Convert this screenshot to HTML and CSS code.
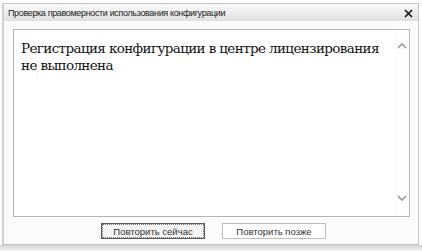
FILE: index.html
```html
<!DOCTYPE html>
<html lang="ru">
<head>
<meta charset="utf-8">
<link rel="stylesheet" href="styles.css">
</head>
<body>
<div class="window">
  <div class="titlebar">
    <span class="title">Проверка правомерности использования конфигурации</span>
    <svg class="close" width="9" height="9" viewBox="0 0 9 9"><path d="M1 1 L8 8 M8 1 L1 8" stroke="#1a1a1a" stroke-width="1.7"/></svg>
  </div>
  <div class="body">
    <div class="textbox">
      <div class="message">Регистрация конфигурации в центре лицензирования не выполнена</div>
      <div class="scroll">
        <svg width="10" height="7" viewBox="0 0 10 7"><path d="M1 6 L5 2 L9 6" fill="none" stroke="#9a9a9a" stroke-width="1.6"/></svg>
        <svg width="10" height="7" viewBox="0 0 10 7"><path d="M1 1 L5 5 L9 1" fill="none" stroke="#9a9a9a" stroke-width="1.6"/></svg>
      </div>
    </div>
    <div class="buttons">
      <button class="btn default"><span class="focus">Повторить сейчас</span></button>
      <button class="btn">Повторить позже</button>
    </div>
  </div>
</div>
<div class="shadow"></div>
</body>
</html>
```
FILE: styles.css
```css
html, body {
  margin: 0;
  padding: 0;
  background: #ffffff;
}
body {
  width: 422px;
  height: 251px;
  overflow: hidden;
  padding-top: 3px;
  box-sizing: border-box;
}
.window {
  margin-left: 2px;
  width: 417px;
  height: 242px;
  box-sizing: border-box;
  border: 1px solid #c4c4c4;
  border-left: 2px solid #d0d0d0;
  background: #fbfbfb;
  display: flex;
  flex-direction: column;
}
.titlebar {
  height: 17px;
  flex: none;
  background: linear-gradient(#fafafa, #e0e0e0);
  display: flex;
  align-items: center;
  justify-content: space-between;
  padding: 0 4px 0 4px;
  font-family: "Liberation Sans", Arial, sans-serif;
  font-size: 9px;
  color: #222;
}
.title {
  letter-spacing: -0.35px;
  margin-top: 1px;
}
.close {
  margin-top: 2px;
  margin-right: 1px;
}
.body {
  flex: 1;
  display: flex;
  flex-direction: column;
  padding: 8px 8px 0 9px;
}
.textbox {
  height: 188px;
  box-sizing: border-box;
  border: 1px solid #b4b4b4;
  background: #fff;
  display: flex;
}
.message {
  flex: 1;
  padding: 10px 0 0 7px;
  font-family: "DejaVu Serif", serif;
  font-size: 13.5px;
  line-height: 17px;
  letter-spacing: -0.62px;
  color: #111;
}
.scroll {
  width: 14px;
  display: flex;
  flex-direction: column;
  justify-content: space-between;
  align-items: center;
  padding: 12px 0 14px 0;
  background: #fdfdfd;
}
.buttons {
  display: flex;
  justify-content: center;
  gap: 17px;
  margin-top: 6px;
  padding-left: 4px;
}
.btn {
  width: 104px;
  height: 16px;
  padding: 0;
  border: 1px solid #bdbdbd;
  background: #fff;
  font-family: "Liberation Sans", Arial, sans-serif;
  font-size: 9.5px;
  color: #333;
  display: flex;
  align-items: center;
  justify-content: center;
}
.btn.default {
  border: 1px solid #5a5a5a;
  background: #f4f4f4;
}
.focus {
  display: flex;
  align-items: center;
  justify-content: center;
  width: 100px;
  height: 12px;
  border: 1px dotted #777;
}
.shadow {
  height: 6px;
  background: linear-gradient(#d2d2d2, #f4f4f4);
}
```
